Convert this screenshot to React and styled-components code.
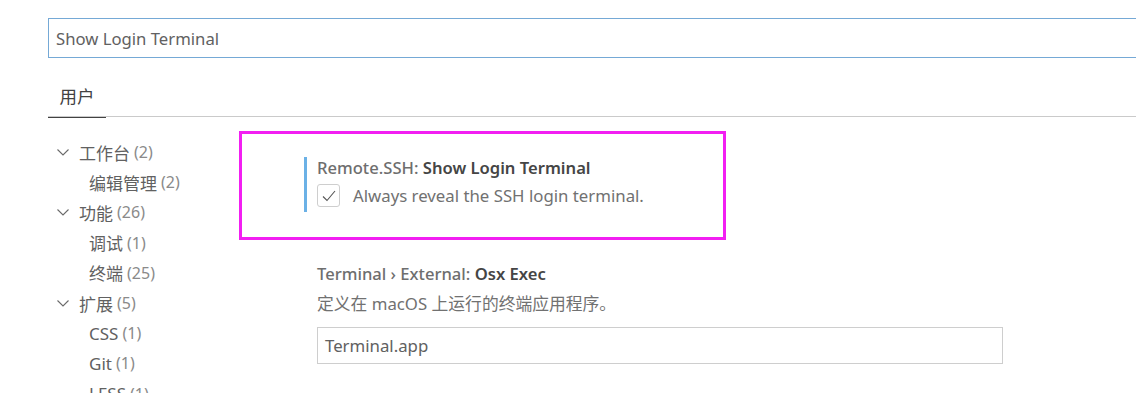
import React from "react";
import styled, { createGlobalStyle } from "styled-components";

const Global = createGlobalStyle`
  html, body { margin: 0; padding: 0; background: #fff; }
  body {
    font-family: "Noto Sans", "Noto Sans CJK SC", sans-serif;
    color: #616161;
    overflow: hidden;
    width: 1136px;
    height: 393px;
  }
`;

const Page = styled.div`
  width: 1136px;
  height: 393px;
  overflow: hidden;
  padding: 18px 0 0 48px;
  box-sizing: border-box;
`;

const SearchBox = styled.div`
  width: 1200px;
  height: 40px;
  box-sizing: border-box;
  border: 1px solid #75a9d6;
  display: flex;
  align-items: center;
  padding-left: 7px;
  font-size: 16.7px;
  color: #616161;
`;

const TabBar = styled.div`
  margin-top: 20px;
  display: flex;
  border-bottom: 1px solid #cacaca;
  height: 39px;
  box-sizing: border-box;
`;

const Tab = styled.div`
  width: 58px;
  display: flex;
  align-items: center;
  justify-content: center;
  font-size: 17.5px;
  color: #424242;
  box-shadow: inset 0 -1px 0 #424242;
  margin-bottom: -1px;
  padding-bottom: 6px;
  box-sizing: border-box;
  height: 40px;
`;

const Body = styled.div`
  display: flex;
  margin-top: 14px;
`;

const Tree = styled.div`
  width: 191px;
  flex-shrink: 0;
  padding-top: 6px;
`;

const TreeRow = styled.div`
  height: 30.2px;
  display: flex;
  align-items: center;
  padding-left: ${(p) => (p.$child ? 41 : 7)}px;
  font-size: 17px;
  color: #616161;
  white-space: nowrap;
`;

const Chevron = styled.svg`
  width: 16px;
  height: 16px;
  margin-right: 8px;
  flex-shrink: 0;
`;

const Count = styled.span`
  color: #8a8a8a;
  margin-left: 4px;
  font-size: 16px;
`;

const Content = styled.div`
  flex: 1;
  display: flex;
  flex-direction: column;
`;

const Highlight = styled.div`
  width: 487px;
  height: 109px;
  box-sizing: border-box;
  border: 3px solid #f21ff2;
  padding-top: 23px;
`;

const SettingItem = styled.div`
  margin-left: ${(p) => p.$indent}px;
  margin-top: ${(p) => p.$top || 0}px;
  border-left: 3px solid ${(p) => (p.$focused ? "#6bb1e6" : "transparent")};
  padding-left: 10px;
  display: flex;
  flex-direction: column;
`;

const Title = styled.div`
  font-size: 16.6px;
  line-height: 22px;
  height: 22px;
  white-space: nowrap;
`;

const Category = styled.span`
  color: #6e6e6e;
  font-weight: 500;
`;

const Label = styled.span`
  color: #454545;
  font-weight: 600;
`;

const CheckRow = styled.div`
  display: flex;
  align-items: center;
  height: 33px;
`;

const CheckBox = styled.div`
  width: 23px;
  height: 23px;
  box-sizing: border-box;
  border: 1px solid #cecece;
  border-radius: 3px;
  display: flex;
  align-items: center;
  justify-content: center;
  margin-right: 13px;
`;

const Description = styled.div`
  font-size: 16.8px;
  color: #717171;
  line-height: 24px;
  white-space: nowrap;
  margin-top: ${(p) => p.$top || 0}px;
`;

const TextInput = styled.div`
  margin-top: 11px;
  width: 686px;
  height: 37px;
  box-sizing: border-box;
  border: 1px solid #cecece;
  display: flex;
  align-items: center;
  padding-left: 7px;
  font-size: 16.8px;
  color: #616161;
`;

const ChevronDown = () => (
  <Chevron viewBox="0 0 16 16">
    <polyline points="2.5,5.5 8,11 13.5,5.5" fill="none" stroke="#6a6a6a" strokeWidth="1.1" />
  </Chevron>
);

const tree = [
  { label: "工作台", count: 2 },
  { label: "编辑管理", count: 2, child: true },
  { label: "功能", count: 26 },
  { label: "调试", count: 1, child: true },
  { label: "终端", count: 25, child: true },
  { label: "扩展", count: 5 },
  { label: "CSS", count: 1, child: true },
  { label: "Git", count: 1, child: true },
  { label: "LESS", count: 1, child: true },
];

export default function App() {
  return (
    <>
      <Global />
      <Page>
        <SearchBox>Show Login Terminal</SearchBox>
        <TabBar>
          <Tab>用户</Tab>
        </TabBar>
        <Body>
          <Tree>
            {tree.map((t) => (
              <TreeRow key={t.label} $child={t.child}>
                {!t.child && <ChevronDown />}
                {t.label}
                <Count>({t.count})</Count>
              </TreeRow>
            ))}
          </Tree>
          <Content>
            <Highlight>
              <SettingItem $indent={62} $focused>
                <Title>
                  <Category>Remote.SSH: </Category>
                  <Label>Show Login Terminal</Label>
                </Title>
                <CheckRow>
                  <CheckBox>
                    <svg width="16" height="16" viewBox="0 0 16 16">
                      <polyline points="2,8.5 6,12.5 14,3" fill="none" stroke="#555" strokeWidth="1.1" />
                    </svg>
                  </CheckBox>
                  <Description>Always reveal the SSH login terminal.</Description>
                </CheckRow>
              </SettingItem>
            </Highlight>
            <SettingItem $indent={65} $top={23}>
              <Title>
                <Category>Terminal › External: </Category>
                <Label>Osx Exec</Label>
              </Title>
              <Description $top={7}>定义在 macOS 上运行的终端应用程序。</Description>
              <TextInput>Terminal.app</TextInput>
            </SettingItem>
          </Content>
        </Body>
      </Page>
    </>
  );
}
